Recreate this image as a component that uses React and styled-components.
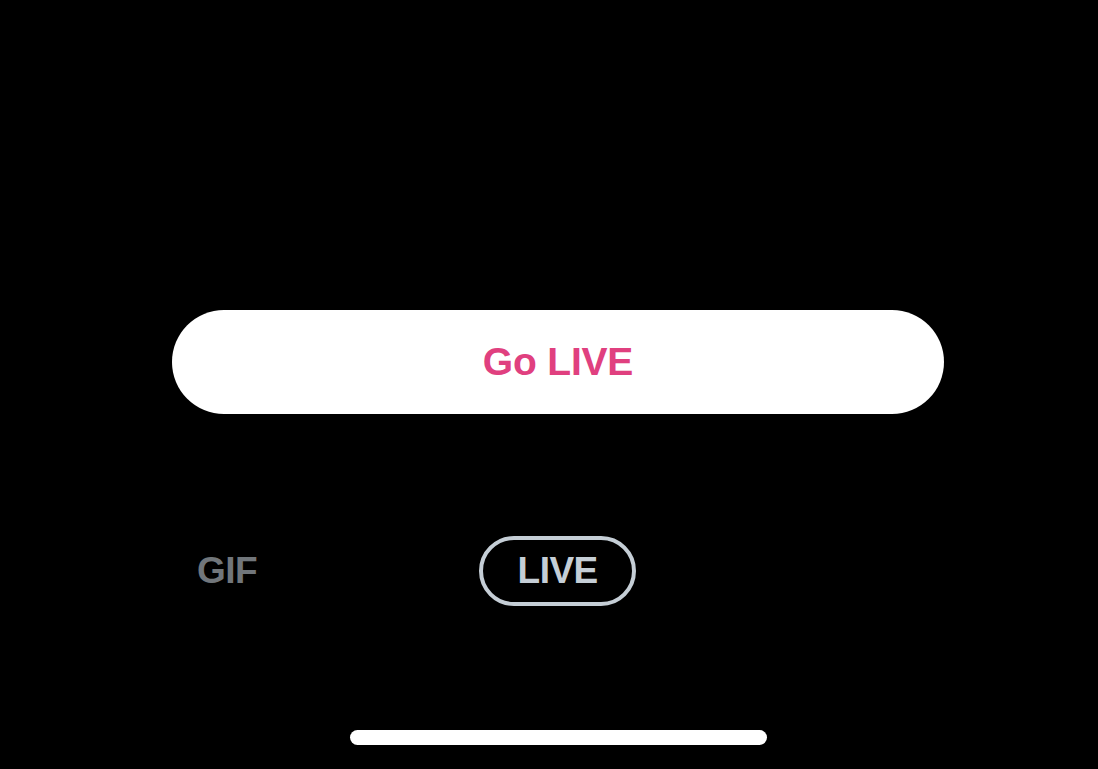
import React from "react";
import styled, { createGlobalStyle } from "styled-components";

const GlobalStyle = createGlobalStyle`
  html, body {
    margin: 0;
    padding: 0;
    background: #000;
  }
  body {
    font-family: "Liberation Sans", Arial, sans-serif;
  }
`;

const Screen = styled.div`
  width: 100%;
  height: 100vh;
  background: #000;
  display: flex;
  flex-direction: column;
  overflow: hidden;
`;

const GoLiveButton = styled.button`
  margin: 310px 0 0 172px;
  width: 772px;
  height: 104px;
  border: none;
  border-radius: 52px;
  background: #fff;
  color: #e0407f;
  font-family: "Liberation Sans", Arial, sans-serif;
  font-weight: 700;
  font-size: 39px;
  letter-spacing: -0.2px;
  display: flex;
  justify-content: center;
  align-items: center;
  cursor: pointer;
  padding: 0;
`;

const ModeRow = styled.div`
  margin: 122px 0 0 197px;
  display: flex;
  align-items: center;
  gap: 222px;
`;

const Mode = styled.span`
  font-weight: 700;
  font-size: 37px;
  color: ${(p) => (p.active ? "#c5ced6" : "#71767b")};
  letter-spacing: -0.5px;
  ${(p) =>
    p.active &&
    `
    box-sizing: border-box;
    height: 70px;
    width: 157px;
    border: 4px solid #c5ced6;
    border-radius: 35px;
    display: flex;
    justify-content: center;
    align-items: center;
  `}
`;

const HomeIndicator = styled.div`
  margin: auto 0 24px 350px;
  width: 417px;
  height: 15px;
  border-radius: 8px;
  background: #fff;
`;

const App = () => {
  return (
    <>
      <GlobalStyle />
      <Screen>
        <GoLiveButton>Go LIVE</GoLiveButton>
        <ModeRow>
          <Mode>GIF</Mode>
          <Mode active>LIVE</Mode>
        </ModeRow>
        <HomeIndicator />
      </Screen>
    </>
  );
};

export default App;
